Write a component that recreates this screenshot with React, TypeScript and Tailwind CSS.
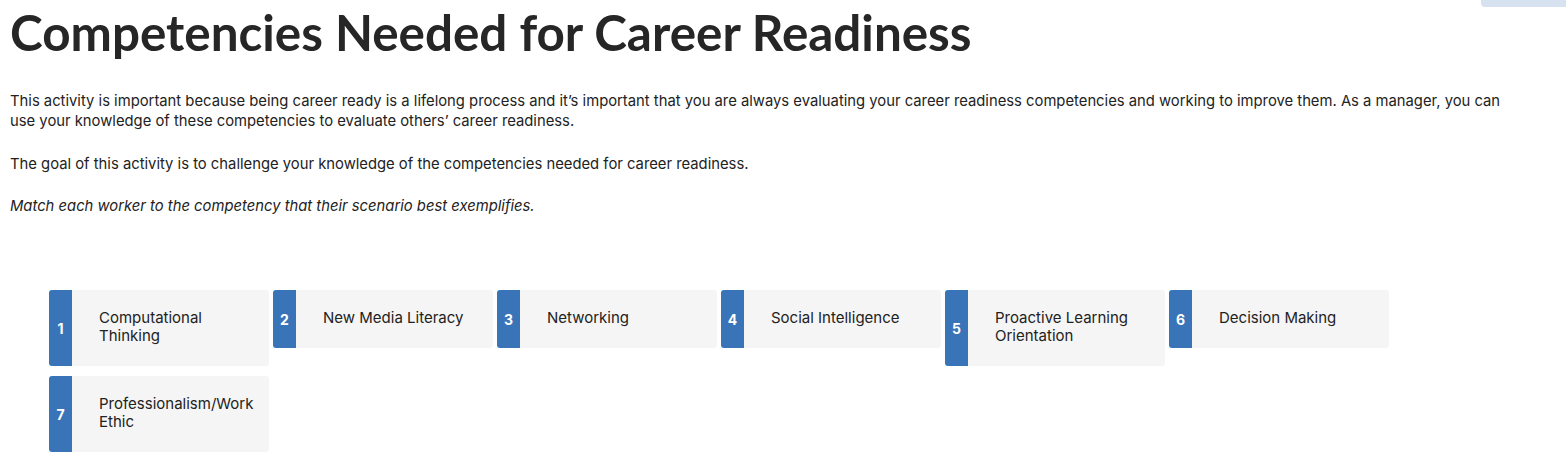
const COMPETENCIES = [
  "Computational Thinking",
  "New Media Literacy",
  "Networking",
  "Social Intelligence",
  "Proactive Learning Orientation",
  "Decision Making",
  "Professionalism/Work Ethic",
];

function CompetencyCard({ index, label }: { index: number; label: string }) {
  return (
    <div className="flex w-[220px] items-stretch rounded-[3px] bg-[#f5f5f5]">
      <div className="flex w-[23px] shrink-0 items-center justify-center rounded-l-[3px] bg-[#3a74b8] text-[14px] font-bold text-white">
        {index}
      </div>
      <div className="pb-[21px] pl-[27px] pr-[13px] pt-[19px] text-[15px] leading-[18px] text-[#222]">{label}</div>
    </div>
  );
}

export default function App() {
  return (
    <div className="relative min-h-[473px] bg-white font-['Inter',sans-serif] text-[#222]">
      <div className="absolute right-0 top-0 h-[7px] w-[85px] rounded-bl-[4px] bg-[#d6e2f0]" />
      <div className="px-[10px] pt-[4px]">
        <h1 className="font-['Lato',sans-serif] text-[49.4px] font-bold leading-[56px] text-[#262626]">
          Competencies Needed for Career Readiness
        </h1>
        <div className="mt-[31px] max-w-[1510px] text-[14.8px] leading-[20px]">
          <p className="mb-[23px]">
            This activity is important because being career ready is a lifelong process and it’s important that you are
            always evaluating your career readiness competencies and working to improve them. As a manager, you can use
            your knowledge of these competencies to evaluate others’ career readiness.
          </p>
          <p className="mb-[22px]">
            The goal of this activity is to challenge your knowledge of the competencies needed for career readiness.
          </p>
          <p className="italic">Match each worker to the competency that their scenario best exemplifies.</p>
        </div>
      </div>
      <div className="mt-[74px] flex flex-wrap items-start gap-x-[4px] gap-y-[10px] pl-[49px] pr-[100px]">
        {COMPETENCIES.map((label, i) => (
          <CompetencyCard key={label} index={i + 1} label={label} />
        ))}
      </div>
    </div>
  );
}
